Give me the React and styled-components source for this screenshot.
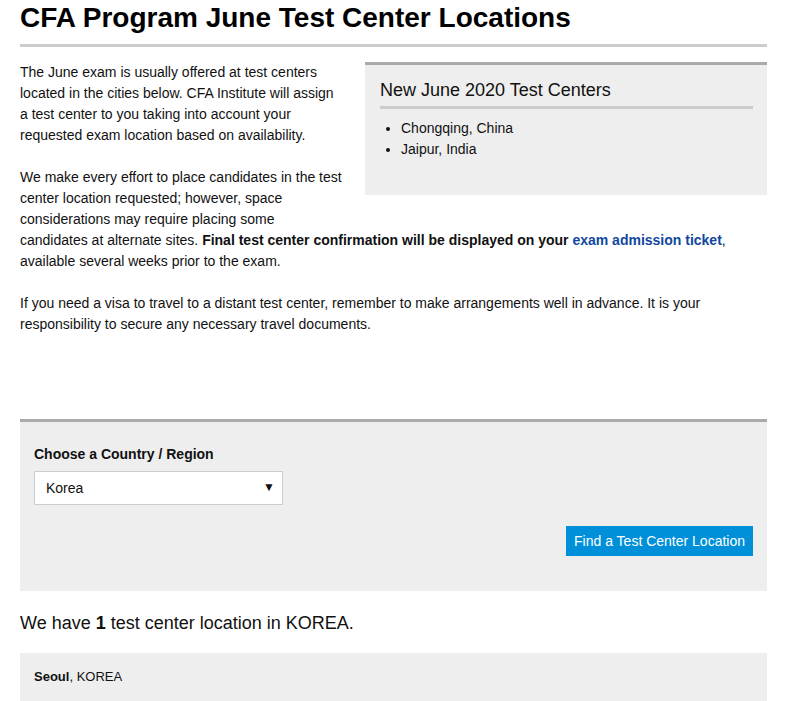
import React from "react";
import styled, { createGlobalStyle } from "styled-components";

const GlobalStyle = createGlobalStyle`
  body {
    margin: 0;
    background: #fff;
    font-family: "Liberation Sans", Arial, sans-serif;
    color: #111;
  }
`;

const Page = styled.div`
  padding: 2px 19px 0 20px;
`;

const Title = styled.h1`
  margin: 0;
  font-size: 28px;
  line-height: 32px;
  font-weight: bold;
  color: #000;
  padding-bottom: 10px;
  border-bottom: 3px solid #ccc;
`;

const Intro = styled.div`
  margin-top: 15px;
  font-size: 14px;
  line-height: 21px;

  &::after {
    content: "";
    display: block;
    clear: both;
  }
`;

const Paragraph = styled.p`
  margin: 0 0 21px;

  &:last-child {
    margin-bottom: 0;
  }
`;

const NewCenters = styled.aside`
  float: right;
  width: 402px;
  box-sizing: border-box;
  margin: 0 0 20px 20px;
  background: #eee;
  border-top: 3px solid #aaa;
  padding: 13px 14px 35px 15px;
`;

const BoxHeading = styled.h2`
  margin: 0;
  font-size: 18px;
  font-weight: normal;
  line-height: 24px;
  padding-bottom: 4px;
  border-bottom: 3px solid #ccc;
`;

const CityList = styled.ul`
  margin: 9px 0 0;
  padding-left: 21px;
`;

const Link = styled.a`
  color: #10479f;
  font-weight: bold;
  text-decoration: none;
`;

const Finder = styled.section`
  margin-top: 84px;
  background: #eee;
  border-top: 3px solid #aaa;
  padding: 22px 14px 35px;
  display: flex;
  flex-direction: column;
`;

const Label = styled.label`
  font-size: 14px;
  line-height: 21px;
  font-weight: bold;
  margin-bottom: 6px;
`;

const SelectWrap = styled.div`
  position: relative;
  width: 249px;

  &::after {
    content: "▼";
    position: absolute;
    right: 8px;
    top: 9px;
    font-size: 12px;
    color: #111;
    pointer-events: none;
  }
`;

const Select = styled.select`
  appearance: none;
  width: 100%;
  height: 34px;
  box-sizing: border-box;
  border: 1px solid #ccc;
  border-radius: 0;
  background: #fff;
  padding: 0 11px;
  font-family: inherit;
  font-size: 14px;
  color: #111;
`;

const Actions = styled.div`
  display: flex;
  justify-content: flex-end;
  margin-top: 21px;
`;

const FindButton = styled.button`
  height: 30px;
  padding: 0 8px;
  border: none;
  background: #0090d9;
  color: #fff;
  font-family: inherit;
  font-size: 14px;
  cursor: pointer;
`;

const Result = styled.p`
  margin: 20px 0 18px;
  font-size: 18px;
  line-height: 24px;
`;

const Location = styled.div`
  background: #eee;
  padding: 14px 14px 20px;
  font-size: 13px;
  line-height: 20px;
`;

const cities = ["Chongqing, China", "Jaipur, India"];

const App = () => {
  return (
    <>
      <GlobalStyle />
      <Page>
        <Title>CFA Program June Test Center Locations</Title>
        <Intro>
          <NewCenters>
            <BoxHeading>New June 2020 Test Centers</BoxHeading>
            <CityList>
              {cities.map((city) => (
                <li key={city}>{city}</li>
              ))}
            </CityList>
          </NewCenters>
          <Paragraph>
            The June exam is usually offered at test centers located in the
            cities below. CFA Institute will assign a test center to you taking
            into account your requested exam location based on availability.
          </Paragraph>
          <Paragraph>
            We make every effort to place candidates in the test center location
            requested; however, space considerations may require placing some
            candidates at alternate sites.{" "}
            <strong>Final test center confirmation will be displayed on your</strong>{" "}
            <Link href="#">exam admission ticket</Link>, available several weeks
            prior to the exam.
          </Paragraph>
          <Paragraph>
            If you need a visa to travel to a distant test center, remember to
            make arrangements well in advance. It is your responsibility to
            secure any necessary travel documents.
          </Paragraph>
        </Intro>

        <Finder>
          <Label htmlFor="country">Choose a Country / Region</Label>
          <SelectWrap>
            <Select id="country" defaultValue="Korea">
              <option>China</option>
              <option>India</option>
              <option>Korea</option>
            </Select>
          </SelectWrap>
          <Actions>
            <FindButton>Find a Test Center Location</FindButton>
          </Actions>
        </Finder>

        <Result>
          We have <strong>1</strong> test center location in KOREA.
        </Result>
        <Location>
          <strong>Seoul</strong>, KOREA
        </Location>
      </Page>
    </>
  );
};

export default App;
